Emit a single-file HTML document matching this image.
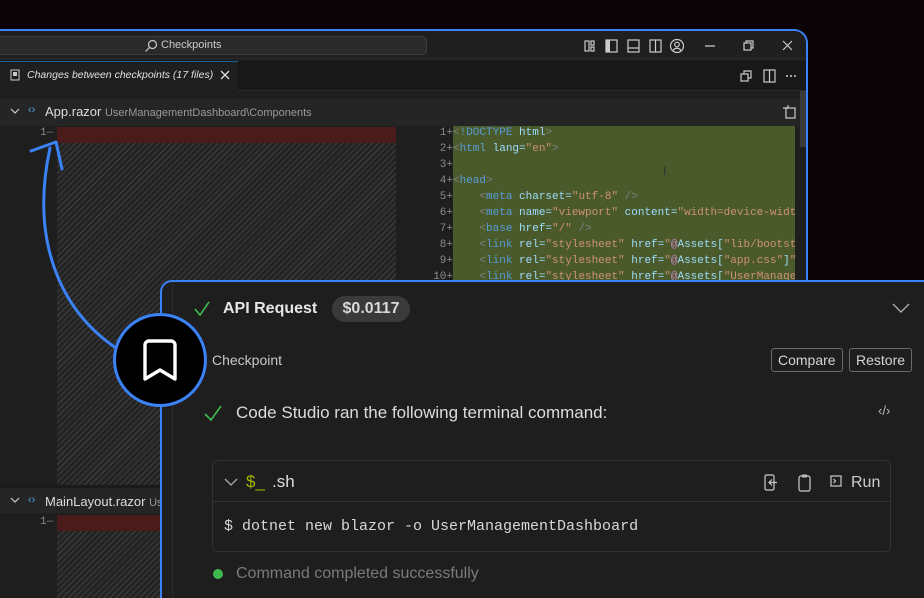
<!DOCTYPE html>
<html style="width:924px;height:598px;overflow:hidden"><head><meta charset="utf-8"><style>
*{margin:0;padding:0;box-sizing:border-box}
body{width:924px;height:598px;overflow:hidden;background:#0b0306;font-family:"Liberation Sans",sans-serif;position:relative}
.a{position:absolute}
.mono{font-family:"Liberation Mono",monospace}
.win{left:-4px;top:29px;width:812px;height:569px;background:#1f1f1f;border:2px solid #3b82f6;border-left:none;border-bottom:none;border-top-right-radius:14px;overflow:hidden}
.hatch{background:repeating-linear-gradient(135deg,#232323 0 3px,#3a3a3a 3px 4.2px)}
.ln{font-size:11px;color:#8a8a8a;line-height:16px;font-family:"Liberation Mono",monospace}
.code{font-size:11px;line-height:16px;color:#9cdcfe;white-space:pre;font-family:"Liberation Mono",monospace}
.t{color:#808080}.k{color:#569cd6}.s{color:#ce9178}.at{color:#9cdcfe}.p{color:#c586c0}
.ic{stroke:#ccc;fill:none;stroke-width:1.2}
.btn{border:1px solid #6a6a6a;border-radius:3px;color:#d4d4d4;font-size:14px;height:24px;line-height:22px;padding:0 6px}
</style></head><body>
<div class="a win">
  <div class="a" style="left:0;top:0;width:812px;height:28px;background:#1f1f1f;border-bottom:1px solid #2b2b2b"></div>
  <div class="a" style="left:0;top:5px;width:431px;height:19px;background:#2a2a2a;border:1px solid #3c3c3c;border-radius:5px"></div>
  <svg class="a" style="left:148px;top:8px" width="14" height="14" viewBox="0 0 14 14"><circle cx="8.5" cy="5.5" r="4" class="ic"/><path d="M5.5 8.5L1.5 12.5" class="ic"/></svg>
  <div class="a" style="left:165px;top:8px;font-size:11px;color:#ccc">Checkpoints</div>
  <svg class="a" style="left:588px;top:7px" width="220" height="16" viewBox="0 0 220 16">
    <rect x="1" y="3" width="4" height="10" class="ic"/><rect x="7" y="3" width="3" height="4" class="ic"/><rect x="7" y="9" width="3" height="4" class="ic"/>
    <rect x="22" y="2" width="11" height="12" class="ic"/><rect x="22" y="2" width="4" height="12" fill="#ccc"/>
    <rect x="44" y="2" width="11" height="12" class="ic"/><path d="M44 10h11" class="ic"/>
    <rect x="66" y="2" width="11" height="12" class="ic"/><path d="M71.5 2v12" class="ic"/>
    <circle cx="93" cy="8" r="6.5" class="ic"/><circle cx="93" cy="6.5" r="2.3" class="ic"/><path d="M89 12.5c2-3 6-3 8 0" class="ic"/>
    <path d="M121 8h10" class="ic"/>
    <rect x="160" y="5" width="7" height="7" class="ic"/><path d="M162 5v-2h7v7h-2" class="ic"/>
    <path d="M199 3l9 9M208 3l-9 9" class="ic"/>
  </svg>
  <div class="a" style="left:0;top:30px;width:812px;height:30px;background:#181818;border-bottom:1px solid #2b2b2b"></div>
  <div class="a" style="left:0;top:30px;width:242px;height:31px;background:#1f1f1f;border-top:1px solid #0e639c"></div>
  <svg class="a" style="left:14px;top:38px" width="10" height="12" viewBox="0 0 10 12"><rect x="1" y="1" width="8" height="10" fill="none" stroke="#ccc"/><rect x="3" y="3" width="4" height="4" fill="#ccc"/></svg>
  <div class="a" style="left:31px;top:38px;font-size:10.5px;font-style:italic;color:#e0e0e0">Changes between checkpoints (17 files)</div>
  <svg class="a" style="left:224px;top:39px" width="10" height="10"><path d="M1 1l8 8M9 1l-8 8" stroke="#ddd" stroke-width="1.3"/></svg>
  <svg class="a" style="left:744px;top:38px" width="60" height="14" viewBox="0 0 60 14">
    <rect x="1" y="5" width="7" height="7" class="ic"/><path d="M4 5V2h7v7H8" class="ic"/>
    <rect x="24" y="1" width="11" height="12" class="ic"/><path d="M29.5 1v12" class="ic"/>
    <circle cx="47" cy="7" r="1" fill="#ccc"/><circle cx="51" cy="7" r="1" fill="#ccc"/><circle cx="55" cy="7" r="1" fill="#ccc"/>
  </svg>
  <div class="a" style="left:0;top:68px;width:812px;height:27px;background:#252526"></div>
  <svg class="a" style="left:14px;top:76px" width="10" height="8"><path d="M1 2l4 4 4-4" stroke="#ccc" fill="none" stroke-width="1.2"/></svg>
  <div class="a" style="left:32px;top:73px;font-size:11px;color:#4fa3e0">‹›</div>
  <div class="a" style="left:49px;top:73px;font-size:13px;color:#ddd">App.razor <span style="font-size:11px;color:#9a9a9a">UserManagementDashboard\Components</span></div>
  <svg class="a" style="left:786px;top:73px" width="14" height="16" viewBox="0 0 14 16"><rect x="4" y="4" width="9" height="10" class="ic"/><path d="M1 4h5V1" class="ic"/></svg>
  <div class="a" style="left:0;top:95px;width:812px;height:480px;background:#1e1e1e"></div>
  <div class="a hatch" style="left:61px;top:96px;width:339px;height:358px"></div>
  <div class="a" style="left:61px;top:96px;width:339px;height:16px;background:#4a1b1b"></div>
  <div class="a ln" style="left:44px;top:94px">1<span style="color:#777">—</span></div>
  <div class="a" style="left:457px;top:95px;width:342px;height:200px;background:#4b5a2b"></div>
  <div class="a ln" style="left:420px;top:94px;width:37px;text-align:right">1+<br>2+<br>3+<br>4+<br>5+<br>6+<br>7+<br>8+<br>9+<br>10+</div>
  <div class="a code" style="left:457px;top:94px;width:342px;overflow:hidden"><span class="t">&lt;</span><span class="k">!DOCTYPE</span> <span class="at">html</span><span class="t">&gt;</span>
<span class="t">&lt;</span><span class="k">html</span> lang=<span class="s">"en"</span><span class="t">&gt;</span>

<span class="t">&lt;</span><span class="k">head</span><span class="t">&gt;</span>
    <span class="t">&lt;</span><span class="k">meta</span> charset=<span class="s">"utf-8"</span> <span class="t">/&gt;</span>
    <span class="t">&lt;</span><span class="k">meta</span> name=<span class="s">"viewport"</span> content=<span class="s">"width=device-width</span>
    <span class="t">&lt;</span><span class="k">base</span> href=<span class="s">"/"</span> <span class="t">/&gt;</span>
    <span class="t">&lt;</span><span class="k">link</span> rel=<span class="s">"stylesheet"</span> href=<span class="s">"</span><span class="p">@</span>Assets[<span class="s">"lib/bootstr</span>
    <span class="t">&lt;</span><span class="k">link</span> rel=<span class="s">"stylesheet"</span> href=<span class="s">"</span><span class="p">@</span>Assets[<span class="s">"app.css"</span>]<span class="s">"</span>
    <span class="t">&lt;</span><span class="k">link</span> rel=<span class="s">"stylesheet"</span> href=<span class="s">"</span><span class="p">@</span>Assets[<span class="s">"UserManage</span></div>
  <div class="a" style="left:667px;top:133px;color:#333;font-size:12px">I</div>
  <div class="a" style="left:804px;top:60px;width:6px;height:56px;background:#3a3a3a"></div>
  <div class="a" style="left:0;top:454px;width:812px;height:5px;background:#1a1a1a"></div>
  <div class="a" style="left:0;top:457px;width:812px;height:25px;background:#252526"></div>
  <svg class="a" style="left:14px;top:465px" width="10" height="8"><path d="M1 2l4 4 4-4" stroke="#ccc" fill="none" stroke-width="1.2"/></svg>
  <div class="a" style="left:32px;top:463px;font-size:11px;color:#4fa3e0">‹›</div>
  <div class="a" style="left:49px;top:463px;font-size:13px;color:#ddd">MainLayout.razor <span style="font-size:11px;color:#9a9a9a">UserManagementDashboard</span></div>
  <div class="a hatch" style="left:61px;top:484px;width:339px;height:85px"></div>
  <div class="a" style="left:61px;top:484px;width:339px;height:16px;background:#4a1b1b"></div>
  <div class="a ln" style="left:44px;top:483px">1<span style="color:#777">—</span></div>
</div>

<svg class="a" style="left:0;top:0" width="200" height="400" viewBox="0 0 200 400">
  <path d="M116 348 C60 310 30 240 50 148" fill="none" stroke="#3b82f6" stroke-width="3" stroke-linecap="round"/>
  <path d="M31 151 L56 142 L62 169" fill="none" stroke="#3b82f6" stroke-width="3" stroke-linecap="round" stroke-linejoin="round"/>
</svg>

<div class="a" style="left:160px;top:280px;width:764px;height:318px;background:#1e1e1e;border:2px solid #3b82f6;border-right:none;border-bottom:none;border-top-left-radius:12px"></div>
<div class="a" style="left:172px;top:282px;width:1px;height:316px;background:#2c2c2c"></div>
<svg class="a" style="left:193px;top:301px" width="18" height="16"><path d="M2 8l5 6 9-13" stroke="#3fb950" fill="none" stroke-width="1.6"/></svg>
<div class="a" style="left:223px;top:300px;font-size:16px;font-weight:bold;color:#e6e6e6">API Request</div>
<div class="a" style="left:332px;top:296px;width:78px;height:26px;border-radius:13px;background:#3a3a3a;color:#d8d8d8;font-size:16px;font-weight:bold;line-height:26px;text-align:center">$0.0117</div>
<svg class="a" style="left:892px;top:302px" width="18" height="12"><path d="M1 2l8 8 8-8" stroke="#aaa" fill="none" stroke-width="1.4"/></svg>
<div class="a" style="left:212px;top:352px;font-size:14px;color:#c8c8c8">Checkpoint</div>
<div class="a btn" style="left:771px;top:348px">Compare</div>
<div class="a btn" style="left:849px;top:348px">Restore</div>
<svg class="a" style="left:203px;top:404px" width="20" height="18"><path d="M2 10l6 6 10-14" stroke="#3fb950" fill="none" stroke-width="1.6"/></svg>
<div class="a" style="left:236px;top:403px;font-size:17px;color:#dcdcdc">Code Studio ran the following terminal command:</div>
<div class="a" style="left:878px;top:403px;font-size:13px;color:#bbb">‹/›</div>
<div class="a" style="left:212px;top:460px;width:679px;height:92px;border:1px solid #333;border-radius:6px;background:#1e1e1e"></div>
<div class="a" style="left:213px;top:501px;width:677px;height:1px;background:#333"></div>
<svg class="a" style="left:224px;top:477px" width="14" height="10"><path d="M1 2l6 6 6-6" stroke="#aaa" fill="none" stroke-width="1.3"/></svg>
<div class="a" style="left:246px;top:472px;font-size:17px;color:#a6b800">$_</div>
<div class="a" style="left:272px;top:472px;font-size:17px;color:#ddd">.sh</div>
<svg class="a" style="left:763px;top:473px" width="80" height="20" viewBox="0 0 80 20">
  <rect x="2" y="2" width="9" height="15" rx="1.5" class="ic" stroke="#bbb"/><path d="M14 9.5H6M9 6.5l-3 3 3 3" class="ic" stroke="#bbb"/>
  <rect x="36" y="3" width="11" height="15" rx="2" class="ic" stroke="#bbb"/><rect x="39" y="1.5" width="5" height="3" fill="#bbb"/>
  <rect x="68" y="3" width="10" height="10" class="ic" stroke="#bbb"/><path d="M70.5 6l2 2-2 2" class="ic" stroke="#bbb"/>
</svg>
<div class="a" style="left:851px;top:474px;font-size:16px;color:#ccc">Run</div>
<div class="a mono" style="left:224px;top:518px;font-size:15px;color:#d8d8d8">$ dotnet new blazor -o UserManagementDashboard</div>
<div class="a" style="left:213px;top:569px;width:10px;height:10px;border-radius:5px;background:#3fb950"></div>
<div class="a" style="left:236px;top:565px;font-size:16px;color:#7a7a7a">Command completed successfully</div>

<div class="a" style="left:113px;top:313px;width:94px;height:94px;border-radius:50%;background:#000;border:3px solid #3b82f6"></div>
<svg class="a" style="left:142px;top:338px" width="36" height="44" viewBox="0 0 36 44"><path d="M3 7a4 4 0 0 1 4-4h22a4 4 0 0 1 4 4v34l-15-9-15 9z" fill="none" stroke="#fff" stroke-width="3.4" stroke-linejoin="round"/></svg>
</body></html>
